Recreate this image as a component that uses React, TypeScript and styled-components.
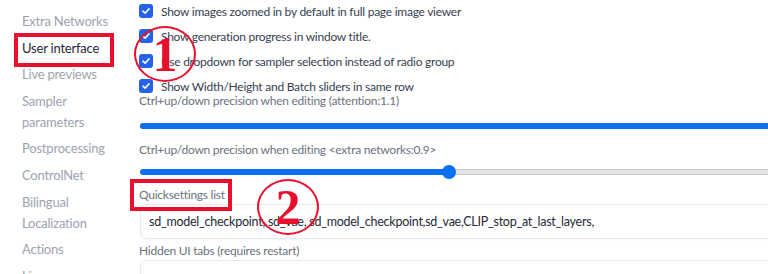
import React from 'react';
import styled, { createGlobalStyle } from 'styled-components';

const GlobalStyle = createGlobalStyle`
  html, body {
    margin: 0;
    padding: 0;
    background: #ffffff;
    overflow: hidden;
  }
  body {
    font-family: Lato, "Noto Sans", sans-serif;
    font-size: 13px;
    width: 768px;
    height: 274px;
  }
`;

const Page = styled.div`
  display: flex;
  flex-direction: row;
  align-items: flex-start;
  width: 850px;
  height: 274px;
  overflow: hidden;
`;

const Sidebar = styled.nav`
  display: flex;
  flex-direction: column;
  gap: 5.6px;
  width: 130px;
  flex-shrink: 0;
  padding: 11px 0 0 22px;
  box-sizing: border-box;
`;

const NavItem = styled.div<{ $active?: boolean }>`
  position: relative;
  flex-shrink: 0;
  font-size: 13px;
  letter-spacing: -0.2px;
  line-height: 21px;
  color: ${p => (p.$active ? '#1f2937' : '#9ca3af')};

  ${p =>
    p.$active &&
    `
    &::after {
      content: '';
      position: absolute;
      left: -8px;
      top: -5px;
      width: 92px;
      height: 26px;
      border: 4px solid #e8112d;
    }
  `}
`;

const Main = styled.main`
  position: relative;
  display: flex;
  flex-direction: column;
  width: 697px;
  flex-shrink: 0;
  padding: 3px 0 0 9px;
  box-sizing: border-box;

  & > * {
    flex-shrink: 0;
  }
`;

const CheckList = styled.div`
  display: flex;
  flex-direction: column;
  gap: 9px;
`;

const CheckRow = styled.label`
  display: flex;
  align-items: center;
  gap: 8px;
  height: 16px;
  color: #374151;
  font-size: 12px;
  letter-spacing: -0.25px;
  white-space: nowrap;
`;

const Box = styled.span`
  display: inline-flex;
  align-items: center;
  justify-content: center;
  width: 14px;
  height: 14px;
  border-radius: 3px;
  background: #2563eb;
  flex-shrink: 0;
`;

const FieldLabel = styled.div<{ $gap: number }>`
  margin-top: ${p => p.$gap}px;
  line-height: 16px;
  font-size: 12px;
  letter-spacing: -0.25px;
  color: #6b7280;
  white-space: nowrap;
`;

const Track = styled.div<{ $gap: number }>`
  position: relative;
  display: flex;
  align-items: center;
  margin: ${p => p.$gap}px 0 0 1px;
  height: 14px;
`;

const Rail = styled.div`
  flex: 1;
  height: 4px;
  background: #e5e5e5;
  border: 1px solid #c9c9c9;
  border-radius: 3px;
`;

const Fill = styled.div`
  position: absolute;
  left: 0;
  top: 4px;
  height: 6px;
  border-radius: 3px;
  background: #0b6ff2;
`;

const Thumb = styled.div`
  position: absolute;
  top: 0;
  width: 14px;
  height: 14px;
  margin-left: -7px;
  border-radius: 50%;
  background: #0b6ff2;
`;

const TextBox = styled.div<{ $gap: number }>`
  margin: ${p => p.$gap}px 0 0 1px;
  height: 35px;
  box-sizing: border-box;
  display: flex;
  align-items: center;
  padding-left: 8px;
  border: 1px solid #e5e7eb;
  border-radius: 7px;
  font-size: 12.5px;
  letter-spacing: -0.25px;
  color: #1f2937;
  white-space: nowrap;
  box-shadow: 0 1px 2px rgba(0, 0, 0, 0.03);
`;

const Highlight = styled.span`
  position: relative;
  display: inline-block;
  line-height: 16px;

  &::after {
    content: '';
    position: absolute;
    left: -9px;
    top: -8px;
    width: 94px;
    height: 24px;
    border: 4px solid #e8112d;
  }
`;

const Mark = styled.div<{ $x: number; $y: number }>`
  position: absolute;
  left: ${p => p.$x}px;
  top: ${p => p.$y}px;
  width: 58px;
  height: 52px;
  border: 2.5px solid #e8112d;
  border-radius: 50%;
  display: flex;
  align-items: center;
  justify-content: center;
  font-family: "Liberation Serif", serif;
  font-weight: 700;
  font-size: 50px;
  line-height: 1;
  color: #e8112d;
`;

const Check = () => (
  <svg width="10" height="10" viewBox="0 0 10 10">
    <path d="M2 5.2 L4.1 7.2 L8 2.9" fill="none" stroke="#fff" strokeWidth="1.6" strokeLinecap="round" strokeLinejoin="round" />
  </svg>
);

interface SliderProps {
  gap: number;
  value: number;
  min: number;
  max: number;
}

const Slider: React.FC<SliderProps> = ({ gap, value, min, max }) => {
  const pct = ((value - min) / (max - min)) * 100;
  return (
    <Track $gap={gap}>
      <Rail />
      <Fill style={{ width: `${pct}%` }} />
      <Thumb style={{ left: `${pct}%` }} />
    </Track>
  );
};

const navItems = [
  'Extra Networks',
  'User interface',
  'Live previews',
  'Sampler parameters',
  'Postprocessing',
  'ControlNet',
  'Bilingual Localization',
  'Actions',
  'Licenses',
];

const checks = [
  'Show images zoomed in by default in full page image viewer',
  'Show generation progress in window title.',
  'Use dropdown for sampler selection instead of radio group',
  'Show Width/Height and Batch sliders in same row',
];

const App: React.FC = () => (
  <>
    <GlobalStyle />
    <Page>
      <Sidebar>
        {navItems.map(item => (
          <NavItem key={item} $active={item === 'User interface'}>
            {item}
          </NavItem>
        ))}
      </Sidebar>
      <Main>
        <CheckList>
          {checks.map(c => (
            <CheckRow key={c}>
              <Box>
                <Check />
              </Box>
              {c}
            </CheckRow>
          ))}
        </CheckList>
        <FieldLabel $gap={-1}>Ctrl+up/down precision when editing (attention:1.1)</FieldLabel>
        <Slider gap={10} value={1.1} min={0} max={1.1} />
        <FieldLabel $gap={9}>Ctrl+up/down precision when editing &lt;extra networks:0.9&gt;</FieldLabel>
        <Slider gap={7} value={0.9} min={0} max={2} />
        <FieldLabel $gap={8}>
          <Highlight>Quicksettings list</Highlight>
        </FieldLabel>
        <TextBox $gap={1}>sd_model_checkpoint, sd_vae, sd_model_checkpoint,sd_vae,CLIP_stop_at_last_layers,</TextBox>
        <FieldLabel $gap={4}>Hidden UI tabs (requires restart)</FieldLabel>
        <TextBox $gap={1} />
        <Mark $x={4} $y={26}>1</Mark>
        <Mark $x={127} $y={179}>2</Mark>
      </Main>
    </Page>
  </>
);

export default App;
